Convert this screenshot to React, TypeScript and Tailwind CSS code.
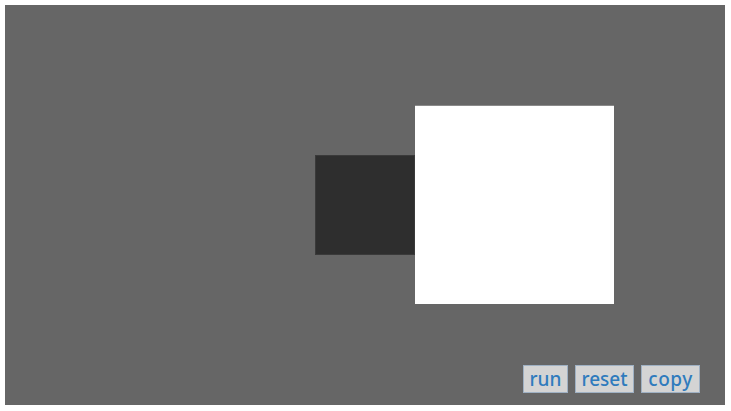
export default function App() {
  return (
    <div className="w-[731px] h-[411px] bg-white p-[5px]">
      <div className="relative w-[720px] h-[400px] bg-[#666666] overflow-hidden">
        {/* canvas drawing */}
        <div className="absolute left-[310px] top-[150px] w-[100px] h-[100px] bg-[#2e2e2e] border border-[#3a3a3a]" />
        <div className="absolute left-[410px] top-[100px] w-[199px] h-[199px] bg-white border-t border-[#8a8a8a]" />

        <div
          className="absolute right-[25px] bottom-[12px] flex gap-[7px]"
          style={{ fontFamily: '"Noto Sans", "Open Sans", sans-serif' }}
        >
          <button className="w-[45px] h-[28px] bg-[#d4d4d4] border border-[#9fb1c4] text-[#2f7bbd] text-[19px] font-medium leading-none flex items-center justify-center">
            run
          </button>
          <button className="w-[59px] h-[28px] bg-[#d4d4d4] border border-[#9fb1c4] text-[#2f7bbd] text-[19px] font-medium leading-none flex items-center justify-center">
            reset
          </button>
          <button className="w-[59px] h-[28px] bg-[#d4d4d4] border border-[#9fb1c4] text-[#2f7bbd] text-[19px] font-medium leading-none flex items-center justify-center tracking-[0.5px]">
            copy
          </button>
        </div>
      </div>
    </div>
  );
}
